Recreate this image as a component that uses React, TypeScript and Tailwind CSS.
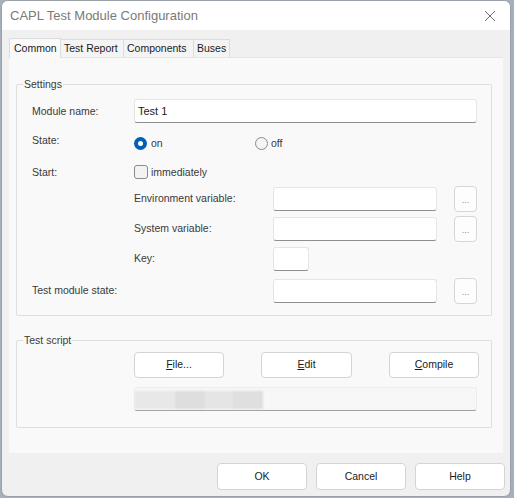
import React from "react";

const font = { fontFamily: '"Liberation Sans", Arial, sans-serif' };

function TextBox({ className = "", value = "" }: { className?: string; value?: string }) {
  return (
    <div
      className={`h-[24px] bg-white border border-[#e5e5e5] border-b-[#8f8f8f] rounded-[3px] px-[3px] pt-[3px] text-[11px] text-[#1b1b1b] ${className}`}
    >
      {value}
    </div>
  );
}

function DotsButton() {
  return (
    <div className="ml-[17px] w-[23px] h-[26px] -mt-[1px] pt-[5px] bg-[#fdfdfd] border border-[#d6d6d6] rounded-[4px] flex items-center justify-center text-[9px] text-[#8a8a8a]">
      ...
    </div>
  );
}

function PushButton({ children, className = "" }: { children: React.ReactNode; className?: string }) {
  return (
    <div
      className={`h-[26px] bg-white border border-[#d4d4d4] rounded-[4px] flex items-center justify-center text-[10.5px] text-[#1b1b1b] ${className}`}
    >
      {children}
    </div>
  );
}

function GroupBox({ title, className = "", children }: { title: string; className?: string; children: React.ReactNode }) {
  return (
    <div className={`relative border border-[#dedede] rounded-[2px] ${className}`}>
      <span className="absolute -top-[8px] left-[6px] px-[1px] bg-[#f9f9f9] text-[10.5px] text-[#3a3a3a] leading-[14px]">
        {title}
      </span>
      {children}
    </div>
  );
}

export default function App() {
  return (
    <div className="w-[514px] h-[498px] bg-[#a7afba] overflow-hidden" style={font}>
      <div className="ml-[1px] w-[510px] h-[497px] bg-[#f0f0f0] rounded-[7px] border border-[#9aa0a8] overflow-hidden flex flex-col">
        {/* Title bar */}
        <div className="h-[29px] bg-white flex items-center justify-between pl-[8px] pr-[14px] shrink-0">
          <span className="text-[13px] text-[#7a7a7a]">CAPL Test Module Configuration</span>
          <svg width="12" height="12" viewBox="0 0 12 12" className="text-[#6e6e6e]">
            <path d="M1 1 L11 11 M11 1 L1 11" stroke="currentColor" strokeWidth="1" fill="none" />
          </svg>
        </div>

        {/* Tabs */}
        <div className="mt-[7px] ml-[7px] flex items-end h-[20px] text-[10.5px] text-[#1b1b1b]">
          <div className="h-[20px] w-[52px] pl-[4px] pt-[2px] bg-[#f9f9f9] border border-b-0 border-[#dcdcdc] relative z-10 -mb-[1px]">
            Common
          </div>
          <div className="h-[18px] w-[63px] pl-[3px] pt-[1px] bg-[#f4f4f4] border border-l-0 border-b-0 border-[#dcdcdc]">Test Report</div>
          <div className="h-[18px] w-[70px] pl-[3px] pt-[1px] bg-[#f4f4f4] border border-l-0 border-b-0 border-[#dcdcdc]">Components</div>
          <div className="h-[18px] w-[36px] pl-[3px] pt-[1px] bg-[#f4f4f4] border border-l-0 border-b-0 border-[#dcdcdc]">Buses</div>
        </div>

        {/* Tab panel */}
        <div className="ml-[7px] w-[494px] h-[396px] bg-[#f9f9f9] border-t border-[#e6e6e6] pt-[26px] px-[7px]">
          <GroupBox title="Settings" className="w-[476px] h-[232px]">
            <div className="text-[10.5px] text-[#3a3a3a]">
              {/* Module name */}
              <div className="mt-[14px] flex items-center h-[24px]">
                <div className="w-[117px] pl-[15px] pt-[2px]">Module name:</div>
                <TextBox className="w-[343px]" value="Test 1" />
              </div>
              {/* State */}
              <div className="mt-[8px] flex items-center h-[24px]">
                <div className="w-[117px] pl-[15px] -mt-[4px]">State:</div>
                <div className="w-[121px] flex items-center">
                  <span className="w-[13px] h-[13px] rounded-full bg-[#005fb8] flex items-center justify-center">
                    <span className="w-[5px] h-[5px] rounded-full bg-white" />
                  </span>
                  <span className="ml-[4px] mt-[1px]">on</span>
                </div>
                <div className="flex items-center">
                  <span className="w-[13px] h-[13px] rounded-full border border-[#8a8a8a] bg-[#f5f5f5]" />
                  <span className="ml-[3px] mt-[1px]">off</span>
                </div>
              </div>
              {/* Start */}
              <div className="mt-[5px] flex items-center h-[24px]">
                <div className="w-[117px] pl-[15px] mt-[2px]">Start:</div>
                <span className="w-[14px] h-[14px] rounded-[3px] border border-[#8a8a8a] bg-[#f3f3f3]" />
                <span className="ml-[3px] mt-[2px]">immediately</span>
              </div>
              {/* Environment variable */}
              <div className="mt-[3px] flex items-center h-[24px]">
                <div className="w-[117px]" />
                <div className="w-[139px]">Environment variable:</div>
                <TextBox className="w-[164px]" />
                <DotsButton />
              </div>
              {/* System variable */}
              <div className="mt-[6px] flex items-center h-[24px]">
                <div className="w-[117px]" />
                <div className="w-[139px]">System variable:</div>
                <TextBox className="w-[164px]" />
                <DotsButton />
              </div>
              {/* Key */}
              <div className="mt-[6px] flex items-center h-[24px]">
                <div className="w-[117px]" />
                <div className="w-[139px]">Key:</div>
                <TextBox className="w-[36px]" />
              </div>
              {/* Test module state */}
              <div className="mt-[8px] flex items-center h-[24px]">
                <div className="w-[256px] pl-[15px]">Test module state:</div>
                <TextBox className="w-[164px]" />
                <DotsButton />
              </div>
            </div>
          </GroupBox>

          <GroupBox title="Test script" className="mt-[24px] w-[476px] h-[88px]">
            <div className="pl-[117px] pt-[11px]">
              <div className="flex">
                <PushButton className="w-[90px]">
                  <span><u>F</u>ile...</span>
                </PushButton>
                <PushButton className="ml-[37px] w-[91px]">
                  <span><u>E</u>dit</span>
                </PushButton>
                <PushButton className="ml-[37px] w-[90px]">
                  <span><u>C</u>ompile</span>
                </PushButton>
              </div>
              <div className="mt-[9px] w-[343px] h-[24px] bg-[#f7f7f7] border border-[#ececec] border-b-[#a0a0a0] rounded-[3px] flex items-center">
                <div className="w-[128px] h-[18px] mt-[2px] bg-[#e3e3e3] blur-[1px] rounded-[2px] flex">
                  <div className="w-[40px] h-full bg-[#e8e8e8]" />
                  <div className="w-[30px] h-full bg-[#dedede]" />
                  <div className="w-[28px] h-full bg-[#e5e5e5]" />
                  <div className="w-[30px] h-full bg-[#dfdfdf]" />
                </div>
              </div>
            </div>
          </GroupBox>
        </div>

        {/* Dialog buttons */}
        <div className="mt-[10px] flex justify-end pr-[5px] gap-[9px]">
          <PushButton className="w-[90px] h-[27px] bg-[#fdfdfd]">OK</PushButton>
          <PushButton className="w-[90px] h-[27px] bg-[#fdfdfd]">Cancel</PushButton>
          <PushButton className="w-[90px] h-[27px] bg-[#fdfdfd]">Help</PushButton>
        </div>
      </div>
    </div>
  );
}
